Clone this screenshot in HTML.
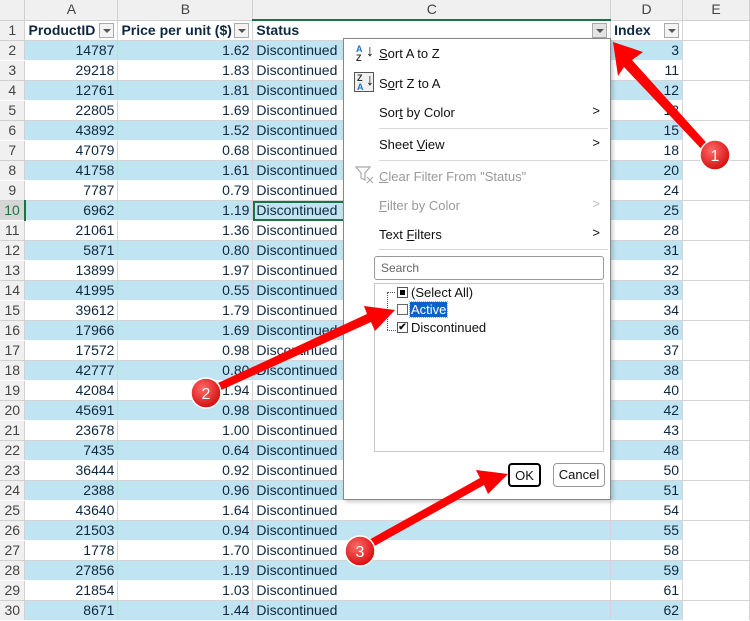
<!DOCTYPE html><html><head><style>
*{margin:0;padding:0;box-sizing:border-box}
body{width:750px;height:617px;overflow:hidden;background:#fff;font-family:"Liberation Sans",sans-serif;position:relative}
table{border-collapse:collapse;position:absolute;left:0;top:0;table-layout:fixed}
td{height:20px;border-right:1px solid #d4d4d4;border-bottom:1px solid #d4d4d4;font-size:14px;color:#0e2841;padding:0 3px;white-space:nowrap;overflow:hidden;line-height:19px}
td.h{background:#f0f0f0;color:#444;text-align:center;font-size:14px;padding:0;border-color:#d0d0d0}
tr.hd td{background:#f0f0f0;text-align:center;color:#444;border-color:#d0d0d0}
td.r{text-align:right}
tr.b td:not(.h):not(.e){background:#c0e4f2}
tr.b td{border-bottom-color:#fff}
td.e{background:#fff}
.dd{display:inline-block;width:15px;height:15px;border:1px solid #aaa;background:#f3f3f3;vertical-align:middle;position:relative;float:right;margin-top:2px}
.dd:after{content:"";position:absolute;left:3px;top:5px;border:4px solid transparent;border-top:4px solid #555}
.menu{position:absolute;left:343px;top:38px;width:268px;height:462px;background:#fff;border:1px solid #888;box-shadow:2px 2px 4px rgba(0,0,0,.2);font-size:13px;color:#111}
.mi{position:absolute;left:35px}
.sep{position:absolute;left:35px;right:2px;height:1px;background:#d8d8d8}
.ch{position:absolute;right:10px;font-size:13px}
.btn{position:absolute;border:1px solid #999;border-radius:4px;font-size:13px;text-align:center;line-height:22px;height:24px}
</style></head><body>
<table>
<colgroup><col style="width:25px"><col style="width:93px"><col style="width:135px"><col style="width:358px"><col style="width:72px"><col style="width:67px"></colgroup>
<tr class="hd"><td>&nbsp;</td><td>A</td><td>B</td><td style="border-bottom:2px solid #1e7145">C</td><td>D</td><td>E</td></tr>
<tr><td class="h">1</td><td style="font-weight:bold">ProductID<span class="dd"></span></td><td style="font-weight:bold">Price per unit ($)<span class="dd"></span></td><td style="font-weight:bold">Status<span class="dd" style="background:#e4e4e4"></span></td><td style="font-weight:bold">Index<span class="dd"></span></td><td class="e"></td></tr>
<tr class="b"><td class="h">2</td><td class="r">14787</td><td class="r">1.62</td><td>Discontinued</td><td class="r">3</td><td class="e"></td></tr>
<tr><td class="h">3</td><td class="r">29218</td><td class="r">1.83</td><td>Discontinued</td><td class="r">11</td><td class="e"></td></tr>
<tr class="b"><td class="h">4</td><td class="r">12761</td><td class="r">1.81</td><td>Discontinued</td><td class="r">12</td><td class="e"></td></tr>
<tr><td class="h">5</td><td class="r">22805</td><td class="r">1.69</td><td>Discontinued</td><td class="r">13</td><td class="e"></td></tr>
<tr class="b"><td class="h">6</td><td class="r">43892</td><td class="r">1.52</td><td>Discontinued</td><td class="r">15</td><td class="e"></td></tr>
<tr><td class="h">7</td><td class="r">47079</td><td class="r">0.68</td><td>Discontinued</td><td class="r">18</td><td class="e"></td></tr>
<tr class="b"><td class="h">8</td><td class="r">41758</td><td class="r">1.61</td><td>Discontinued</td><td class="r">20</td><td class="e"></td></tr>
<tr><td class="h">9</td><td class="r">7787</td><td class="r">0.79</td><td>Discontinued</td><td class="r">24</td><td class="e"></td></tr>
<tr class="b"><td class="h" style="background:#d6d6d6;border-right:2px solid #1e7145;color:#1e7145">10</td><td class="r">6962</td><td class="r">1.19</td><td style="outline:2px solid #1e7145;outline-offset:-2px">Discontinued</td><td class="r">25</td><td class="e"></td></tr>
<tr><td class="h">11</td><td class="r">21061</td><td class="r">1.36</td><td>Discontinued</td><td class="r">28</td><td class="e"></td></tr>
<tr class="b"><td class="h">12</td><td class="r">5871</td><td class="r">0.80</td><td>Discontinued</td><td class="r">31</td><td class="e"></td></tr>
<tr><td class="h">13</td><td class="r">13899</td><td class="r">1.97</td><td>Discontinued</td><td class="r">32</td><td class="e"></td></tr>
<tr class="b"><td class="h">14</td><td class="r">41995</td><td class="r">0.55</td><td>Discontinued</td><td class="r">33</td><td class="e"></td></tr>
<tr><td class="h">15</td><td class="r">39612</td><td class="r">1.79</td><td>Discontinued</td><td class="r">34</td><td class="e"></td></tr>
<tr class="b"><td class="h">16</td><td class="r">17966</td><td class="r">1.69</td><td>Discontinued</td><td class="r">36</td><td class="e"></td></tr>
<tr><td class="h">17</td><td class="r">17572</td><td class="r">0.98</td><td>Discontinued</td><td class="r">37</td><td class="e"></td></tr>
<tr class="b"><td class="h">18</td><td class="r">42777</td><td class="r">0.80</td><td>Discontinued</td><td class="r">38</td><td class="e"></td></tr>
<tr><td class="h">19</td><td class="r">42084</td><td class="r">1.94</td><td>Discontinued</td><td class="r">40</td><td class="e"></td></tr>
<tr class="b"><td class="h">20</td><td class="r">45691</td><td class="r">0.98</td><td>Discontinued</td><td class="r">42</td><td class="e"></td></tr>
<tr><td class="h">21</td><td class="r">23678</td><td class="r">1.00</td><td>Discontinued</td><td class="r">43</td><td class="e"></td></tr>
<tr class="b"><td class="h">22</td><td class="r">7435</td><td class="r">0.64</td><td>Discontinued</td><td class="r">48</td><td class="e"></td></tr>
<tr><td class="h">23</td><td class="r">36444</td><td class="r">0.92</td><td>Discontinued</td><td class="r">50</td><td class="e"></td></tr>
<tr class="b"><td class="h">24</td><td class="r">2388</td><td class="r">0.96</td><td>Discontinued</td><td class="r">51</td><td class="e"></td></tr>
<tr><td class="h">25</td><td class="r">43640</td><td class="r">1.64</td><td>Discontinued</td><td class="r">54</td><td class="e"></td></tr>
<tr class="b"><td class="h">26</td><td class="r">21503</td><td class="r">0.94</td><td>Discontinued</td><td class="r">55</td><td class="e"></td></tr>
<tr><td class="h">27</td><td class="r">1778</td><td class="r">1.70</td><td>Discontinued</td><td class="r">58</td><td class="e"></td></tr>
<tr class="b"><td class="h">28</td><td class="r">27856</td><td class="r">1.19</td><td>Discontinued</td><td class="r">59</td><td class="e"></td></tr>
<tr><td class="h">29</td><td class="r">21854</td><td class="r">1.03</td><td>Discontinued</td><td class="r">61</td><td class="e"></td></tr>
<tr class="b"><td class="h">30</td><td class="r">8671</td><td class="r">1.44</td><td>Discontinued</td><td class="r">62</td><td class="e"></td></tr>
</table>

<div class="menu">
<div style="position:absolute;left:12px;top:6px;font-size:9px;line-height:9px;color:#1a73c8;font-weight:bold">A<br><span style="color:#333">Z</span></div><div style="position:absolute;left:22px;top:4px;font-size:16px">↓</div>
<div class="mi" style="top:7px"><u>S</u>ort A to Z</div>
<div style="position:absolute;left:10px;top:33px;width:20px;height:20px;border:1px solid #555;background:#f0f0f0"></div>
<div style="position:absolute;left:13px;top:35px;font-size:9px;line-height:9px;color:#333;font-weight:bold">Z<br><span style="color:#1a73c8">A</span></div><div style="position:absolute;left:22px;top:33px;font-size:16px">↓</div>
<div class="mi" style="top:37px">S<u>o</u>rt Z to A</div>
<div class="mi" style="top:66px">Sor<u>t</u> by Color</div><div class="ch" style="top:64px">&gt;</div>
<div class="sep" style="top:89px"></div>
<div class="mi" style="top:98px">Sheet <u>V</u>iew</div><div class="ch" style="top:96px">&gt;</div>
<div class="sep" style="top:121px"></div>
<svg style="position:absolute;left:11px;top:127px" width="20" height="18" viewBox="0 0 20 18"><path d="M1 1H15L10 7V14L6 12V7Z" fill="none" stroke="#aaa" stroke-width="1.2"/><path d="M12 11L18 17M18 11L12 17" stroke="#aaa" stroke-width="1.2"/></svg>
<div class="mi" style="top:130px;color:#999"><u>C</u>lear Filter From "Status"</div>
<div class="mi" style="top:159px;color:#999"><u>F</u>ilter by Color</div><div class="ch" style="top:157px;color:#bbb">&gt;</div>
<div class="mi" style="top:188px">Text <u>F</u>ilters</div><div class="ch" style="top:186px">&gt;</div>
<div class="sep" style="top:210px"></div>
<div style="position:absolute;left:30px;top:217px;width:230px;height:24px;border:1px solid #999;border-radius:3px;color:#666;font-size:12px;padding:4px 6px">Search</div>
<div style="position:absolute;left:30px;top:244px;width:230px;height:169px;border:1px solid #c8c8c8">
<div style="position:absolute;left:12px;top:8px;width:8px;height:38px;border-left:1px dotted #555;border-top:1px dotted #555"></div>
<div style="position:absolute;left:12px;top:46px;width:9px;border-top:1px dotted #555"></div>
<div style="position:absolute;left:22px;top:3px;width:11px;height:11px;border:1px solid #555;background:#fff"><div style="margin:2px;width:5px;height:5px;background:#000"></div></div>
<div style="position:absolute;left:36px;top:1px;font-size:13px">(Select All)</div>
<div style="position:absolute;left:22px;top:20px;width:11px;height:11px;border:1px solid #666;background:#fff"></div>
<div style="position:absolute;left:35px;top:18px;font-size:13px;background:#0a64c8;color:#fff;padding:0 1px;outline:1px dotted #e0a030">Active</div>
<div style="position:absolute;left:22px;top:38px;width:11px;height:11px;border:1px solid #555;background:#fff;font-size:10px;line-height:10px;font-weight:bold;text-align:center">✔</div>
<div style="position:absolute;left:36px;top:36px;font-size:13px">Discontinued</div>
</div>
<div class="btn" style="left:164px;top:424px;width:33px;border:2px solid #000">OK</div>
<div class="btn" style="left:209px;top:424px;width:52px">Cancel</div>
</div>

<svg width="750" height="617" style="position:absolute;left:0;top:0" viewBox="0 0 750 617">
<defs><radialGradient id="g" cx="40%" cy="35%" r="65%"><stop offset="0" stop-color="#ff6a6a"/><stop offset="1" stop-color="#d40f0f"/></radialGradient></defs>
<g fill="#f00">
<polygon points="613,42 643,52 632,60 713,150 708,156 624,67 618,76"/>
<polygon points="395,310 375,331 371,322 208,396 205,389 367,314 364,306"/>
<polygon points="508,474 488,494 484,485 362,553 358,546 480,478 476,470"/>
</g>
<g stroke="#fff" stroke-width="1.5" fill="url(#g)">
<circle cx="715" cy="155" r="15"/><circle cx="206" cy="393" r="15"/><circle cx="360" cy="551" r="15"/>
</g>
<g fill="#fff" font-family="Liberation Sans" font-size="16" text-anchor="middle">
<text x="715" y="161">1</text><text x="206" y="399">2</text><text x="360" y="557">3</text>
</g>
</svg>
</body></html>
